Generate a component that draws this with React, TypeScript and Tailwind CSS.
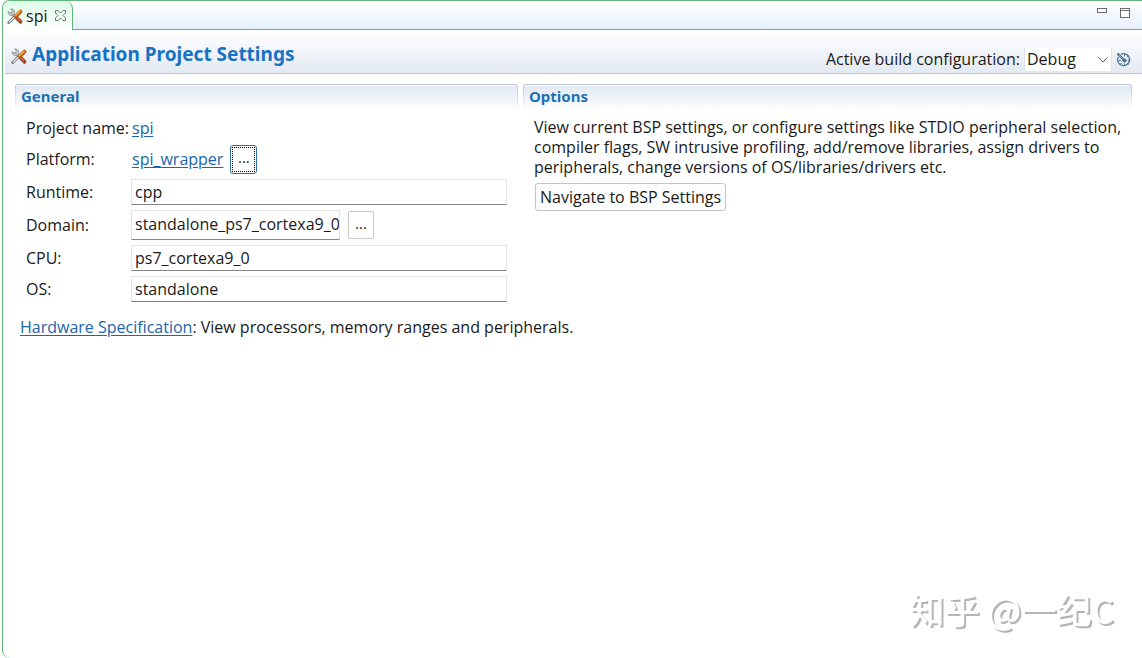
import { useState, type ReactNode } from "react";

function ToolsIcon() {
  return (
    <svg viewBox="0 0 16 16" className="size-4 shrink-0" aria-hidden="true">
      {/* wrench */}
      <path d="M4.500 5.500 13.500 14.500" stroke="#6c7479" strokeWidth="2.600" strokeLinecap="round" />
      <path d="M4.500 5.500 13 14" stroke="#cfd5d9" strokeWidth="1.200" strokeLinecap="round" />
      <path
        d="M1.200 3.500 3 5.300 5 4.800 5.400 2.800 3.600 1C6 .6 7.800 2.200 7.500 4.500 7.200 6.800 5 8 3.200 7.200 1.500 6.600.8 5.200 1.200 3.500Z"
        fill="#d3d9dc"
        stroke="#858c90"
        strokeWidth=".9"
      />
      {/* screwdriver */}
      <path d="m1.800 14.500 5.700-5.700" stroke="#6f7579" strokeWidth="2.800" strokeLinecap="round" />
      <path d="m2 14.300 5.200-5.200" stroke="#eceeee" strokeWidth="1.300" />
      <path d="m9 8 4.400-4.400" stroke="#bd5a12" strokeWidth="4" strokeLinecap="round" />
      <path d="m8.700 7.400 4.200-4.200" stroke="#f5a33c" strokeWidth="2" strokeLinecap="round" />
      <path d="m10.500 10.500 3 3" stroke="#a8401c" strokeWidth="3.600" strokeLinecap="round" />
      <path d="m10.300 10 2.600 2.600" stroke="#df7a38" strokeWidth="1.200" strokeLinecap="round" />
    </svg>
  );
}

function CloseIcon() {
  return (
    <svg viewBox="0 0 11 11" className="size-[11px]" fill="none" stroke="#6b7a76" aria-hidden="true">
      <path d="M.5.5h2.500l2.500 2.500L8 .5h2.500V3L8 5.500 10.500 8v2.500H8L5.500 8 3 10.500H.5V8L3 5.500.5 3Z" />
    </svg>
  );
}

function GaugeIcon() {
  return (
    <svg viewBox="0 0 16 16" className="size-4" fill="none" stroke="#466f94" aria-hidden="true">
      <path d="M5 2.300A6 6 0 1 1 2.300 5" strokeWidth="1.300" />
      <path d="M8.500 2v2.500M8.500 11.500V14M11.500 8H14M2.500 8.500H5M12.500 3.500 11 5M12.500 12.500 11 11M4 12.500 5.500 11" />
      <path d="m1.500 1.500 7.500 7.500" strokeWidth="2.400" />
      <path d="m3 3 5 5" stroke="#a8c3d8" strokeWidth=".7" />
      <circle cx="8.500" cy="8.500" r="1.600" fill="#466f94" />
    </svg>
  );
}

function Section({ title, children }: { title: string; children: ReactNode }) {
  return (
    <section className="min-w-0">
      <div className="rounded-t-[3px] bg-linear-to-b from-[#b9c4d5] to-white px-px pt-px">
        <h2 className="h-[26px] rounded-t-[2px] border-t border-white bg-linear-to-b from-[#e2e9f2] to-white px-[5px] font-['Noto_Sans',sans-serif] text-[15px] leading-5 font-bold text-[#1c70b4]">
          {title}
        </h2>
      </div>
      {children}
    </section>
  );
}

const fieldClass =
  "w-full min-w-0 border border-[#e4e4e4] border-b-[#868686] bg-white pl-[3px] outline-none";
const linkClass = "text-[#2066a8] underline underline-offset-2";

export default function App() {
  const [config, setConfig] = useState("Debug");

  return (
    <div className="flex min-h-screen flex-col bg-white pl-[2px] font-['Open_Sans','Noto_Sans_CJK_SC',sans-serif] text-[16px] leading-5 text-[#1a1a1a]">
      <div className="flex grow flex-col rounded-l-lg border-t border-l border-[#62b67c]">
        {/* Editor tabs */}
        <div className="flex h-[29px] rounded-tl-lg bg-linear-to-b from-white to-[#e4effb]">
          <div className="flex items-center rounded-t-lg border-r border-[#62b67c] bg-linear-to-b from-[#dcfbe6] to-white pr-[5px] pl-1">
            <button type="button" className="flex items-center gap-[3px]">
              <ToolsIcon />
              spi
            </button>
            <button type="button" aria-label="Close spi" className="ml-[7px] px-px">
              <CloseIcon />
            </button>
          </div>
          <div className="flex grow items-start justify-end gap-[13px] border-b border-[#62b67c] pt-[7px] pr-3">
            <button type="button" aria-label="Minimize" className="h-[5px] w-[10px] border border-[#6d6d6d] bg-white" />
            <button
              type="button"
              aria-label="Maximize"
              className="h-[10px] w-[10px] border border-[#6d6d6d] bg-white"
            >
              <span className="mt-px block h-px bg-[#6d6d6d]" />
              <span className="block h-[6px]" />
            </button>
          </div>
        </div>

        {/* Form header */}
        <header className="ml-[2px] flex h-11 justify-between border-b border-[#b9c5d5] bg-linear-to-b from-white to-[#e3e9f2] pr-[10px] pl-[6px]">
          <h1 className="flex items-center gap-[5px] pt-2 font-['Noto_Sans',sans-serif] text-[19px] leading-6 font-bold text-[#1672c4]">
            <ToolsIcon />
            <span className="pb-1">Application Project Settings</span>
          </h1>
          <div className="flex items-end gap-1 pb-[2px]">
            <label htmlFor="config" className="leading-6">
              Active build configuration:
            </label>
            <div className="relative">
              <select
                id="config"
                value={config}
                onChange={(e) => setConfig(e.target.value)}
                className="block h-[23px] w-[88px] appearance-none border-x border-[#dfe3e8] bg-white pb-px pl-[2px] outline-none"
              >
                <option>Debug</option>
                <option>Release</option>
              </select>
              <svg
                viewBox="0 0 10 6"
                className="pointer-events-none absolute top-[9px] right-1 h-[6px] w-[10px]"
                fill="none"
                stroke="#5f5f5f"
                aria-hidden="true"
              >
                <path d="m.5.5 4.500 4.500L9.500.5" />
              </svg>
            </div>
            <button type="button" aria-label="Manage build configurations" className="pb-[3px]">
              <GaugeIcon />
            </button>
          </div>
        </header>

        <main className="pt-[10px] pr-[10px] pb-4 pl-3">
          <div className="grid grid-cols-[503fr_609fr] gap-[5px]">
            <Section title="General">
              <div className="grid grid-cols-[105px_1fr] items-center gap-y-[5px] pt-[7px] pr-[11px] pl-[11px]">
                <span className="pb-px">Project name:</span>
                <div className="pb-px pl-px">
                  <a href="#spi" className={linkClass}>spi</a>
                </div>

                <span>Platform:</span>
                <div className="flex h-[30px] items-center gap-[7px] pl-px">
                  <a href="#spi_wrapper" className={linkClass}>spi_wrapper</a>
                  <button
                    type="button"
                    aria-label="Browse platform"
                    className="h-[29px] w-[27px] rounded-[3px] border border-[#2b70a0] p-px"
                  >
                    <span className="flex h-full items-center justify-center border border-dotted border-black text-[15px] leading-4">
                      <span className="pb-1">...</span>
                    </span>
                  </button>
                </div>

                <label htmlFor="runtime">Runtime:</label>
                <input id="runtime" readOnly value="cpp" className={`${fieldClass} h-[26px]`} />

                <label htmlFor="domain">Domain:</label>
                <div className="flex items-center gap-2">
                  <input
                    id="domain"
                    readOnly
                    value="standalone_ps7_cortexa9_0"
                    className={`${fieldClass} h-[30px] max-w-[209px] pb-[3px]`}
                  />
                  <button
                    type="button"
                    aria-label="Browse domain"
                    className="h-7 w-[26px] shrink-0 rounded-[2px] border border-[#c9c9c9] pb-1 text-[15px] leading-4"
                  >
                    ...
                  </button>
                </div>

                <label htmlFor="cpu">CPU:</label>
                <input id="cpu" readOnly value="ps7_cortexa9_0" className={`${fieldClass} h-[26px]`} />

                <label htmlFor="os">OS:</label>
                <input id="os" readOnly value="standalone" className={`${fieldClass} h-[26px]`} />
              </div>
            </Section>

            <Section title="Options">
              <div className="pt-[6px] pl-[11px]">
                <p>
                  View current BSP settings, or configure settings like STDIO peripheral selection,
                  compiler flags, SW intrusive profiling, add/remove libraries, assign drivers to
                  peripherals, change versions of OS/libraries/drivers etc.
                </p>
                <button
                  type="button"
                  className="mt-[6px] ml-px h-7 rounded-[3px] border border-[#c4c4c4] bg-[#fdfdfd] px-1"
                >
                  Navigate to BSP Settings
                </button>
              </div>
            </Section>
          </div>

          <p className="mt-[15px] pl-[5px]">
            <a href="#hardware" className={linkClass}>Hardware Specification</a>: View processors,
            memory ranges and peripherals.
          </p>
        </main>
      </div>

      <div className="pointer-events-none fixed right-7 bottom-[27px] font-['Noto_Sans_CJK_SC',sans-serif] text-[35px] leading-[44px] font-medium text-white [text-shadow:2px_2px_0_#b5b5b5]">
        知乎 @一纪C
      </div>
    </div>
  );
}
